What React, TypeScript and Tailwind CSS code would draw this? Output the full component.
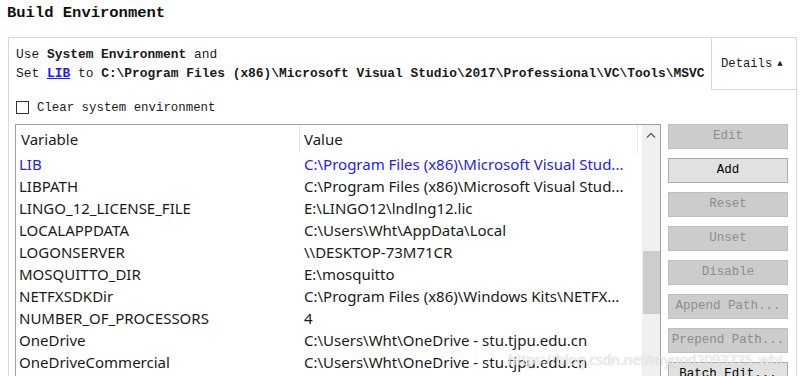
import React from "react";

const mono = { fontFamily: '"Liberation Mono", "DejaVu Sans Mono", monospace' };
const sans = { fontFamily: '"Noto Sans", "Open Sans", sans-serif' };

const rows: [string, string][] = [
  ["LIB", "C:\\Program Files (x86)\\Microsoft Visual Stud..."],
  ["LIBPATH", "C:\\Program Files (x86)\\Microsoft Visual Stud..."],
  ["LINGO_12_LICENSE_FILE", "E:\\LINGO12\\lndlng12.lic"],
  ["LOCALAPPDATA", "C:\\Users\\Wht\\AppData\\Local"],
  ["LOGONSERVER", "\\\\DESKTOP-73M71CR"],
  ["MOSQUITTO_DIR", "E:\\mosquitto"],
  ["NETFXSDKDir", "C:\\Program Files (x86)\\Windows Kits\\NETFX..."],
  ["NUMBER_OF_PROCESSORS", "4"],
  ["OneDrive", "C:\\Users\\Wht\\OneDrive - stu.tjpu.edu.cn"],
  ["OneDriveCommercial", "C:\\Users\\Wht\\OneDrive - stu.tjpu.edu.cn"],
  ["OS", "Windows_NT"],
];

const buttons: [string, boolean][] = [
  ["Edit", false],
  ["Add", true],
  ["Reset", false],
  ["Unset", false],
  ["Disable", false],
  ["Append Path...", false],
  ["Prepend Path...", false],
  ["Batch Edit...", true],
];

export default function App() {
  return (
    <div className="relative w-[810px] h-[376px] overflow-hidden bg-white text-[#1a1a1a]">
      <div className="h-[37px] pl-[7px] pt-[2px]">
        <div className="text-[15.5px] leading-[22px] font-bold text-[#111]" style={mono}>
          Build Environment
        </div>
      </div>
      <div className="ml-[8px] w-[789px] h-[400px] border border-b-0 border-[#d9d9d9] flex flex-col">
        <div className="flex">
          <div className="flex-1 pl-[7px] pt-[7px] text-[12.9px] leading-[19px] whitespace-nowrap overflow-hidden" style={mono}>
            <div>
              Use <span className="font-bold">System Environment</span> and
            </div>
            <div>
              Set <span className="font-bold text-[#1a1aff] underline">LIB</span> to{" "}
              <span className="font-bold">C:\Program Files (x86)\Microsoft Visual Studio\2017\Professional\VC\Tools\MSVC</span>
            </div>
          </div>
          <div className="w-[85px] h-[52px] border-l border-b border-[#d9d9d9] flex items-center pl-[9px] pt-[2px] gap-[5px] text-[12.2px]" style={mono}>
            <span>Details</span>
            <span className="text-[9px] leading-none">▲</span>
          </div>
        </div>
        <div className="flex items-center pl-[7px] mt-[10px] h-[14px]">
          <div className="w-[13px] h-[13px] border border-[#333] bg-white" />
          <span className="ml-[8px] text-[12.4px] leading-[14px] pt-[2px]" style={mono}>
            Clear system environment
          </span>
        </div>
        <div className="flex mt-[10px] ml-[6px]">
          <div className="w-[646px] h-[280px] border border-[#a0a0a0] flex">
            <div className="flex-1 flex flex-col" style={sans}>
              <div className="flex h-[28px] items-center text-[15px]">
                <div className="w-[284px] h-full pl-[5px] flex items-center border-r border-[#e8e8e8]">Variable</div>
                <div className="w-[338px] h-full pl-[4px] flex items-center border-r border-[#e8e8e8]">Value</div>
              </div>
              {rows.map(([k, v], i) => (
                <div
                  key={k}
                  className={
                    "flex h-[22px] items-center text-[15px] whitespace-nowrap " +
                    (i === 0 ? "text-[#2222ee]" : "text-[#1a1a1a]")
                  }
                >
                  <div className="w-[284px] pl-[3px]">{k}</div>
                  <div className="pl-[4px]">{v}</div>
                </div>
              ))}
            </div>
            <div className="w-[18px] bg-[#f0f0f0] flex flex-col items-center">
              <div className="h-[20px] flex items-center justify-center">
                <svg width="10" height="6" viewBox="0 0 10 6">
                  <path d="M1 5.5 L5 1.5 L9 5.5" stroke="#606060" strokeWidth="1.4" fill="none" />
                </svg>
              </div>
              <div className="h-[106px]" />
              <div className="w-[17px] h-[63px] bg-[#cdcdcd]" />
            </div>
          </div>
          <div className="ml-[7px] w-[120px] flex flex-col gap-[9px]">
            {buttons.map(([label, enabled]) => (
              <div
                key={label}
                className={
                  "h-[25px] flex items-center justify-center border text-[12.5px] whitespace-nowrap " +
                  (enabled
                    ? "bg-[#e1e1e1] border-[#adadad] text-black"
                    : "bg-[#cccccc] border-[#bfbfbf] text-[#8d8d8d]")
                }
                style={mono}
              >
                {label}
              </div>
            ))}
          </div>
        </div>
      </div>
      <div
        className="absolute left-[508px] top-[349px] text-[14px] text-white/80 whitespace-nowrap"
        style={{ ...sans, textShadow: "0 0 1px rgba(120,120,120,0.6)" }}
      >
        https://blog.csdn.net/mygod2093725_wht
      </div>
    </div>
  );
}
